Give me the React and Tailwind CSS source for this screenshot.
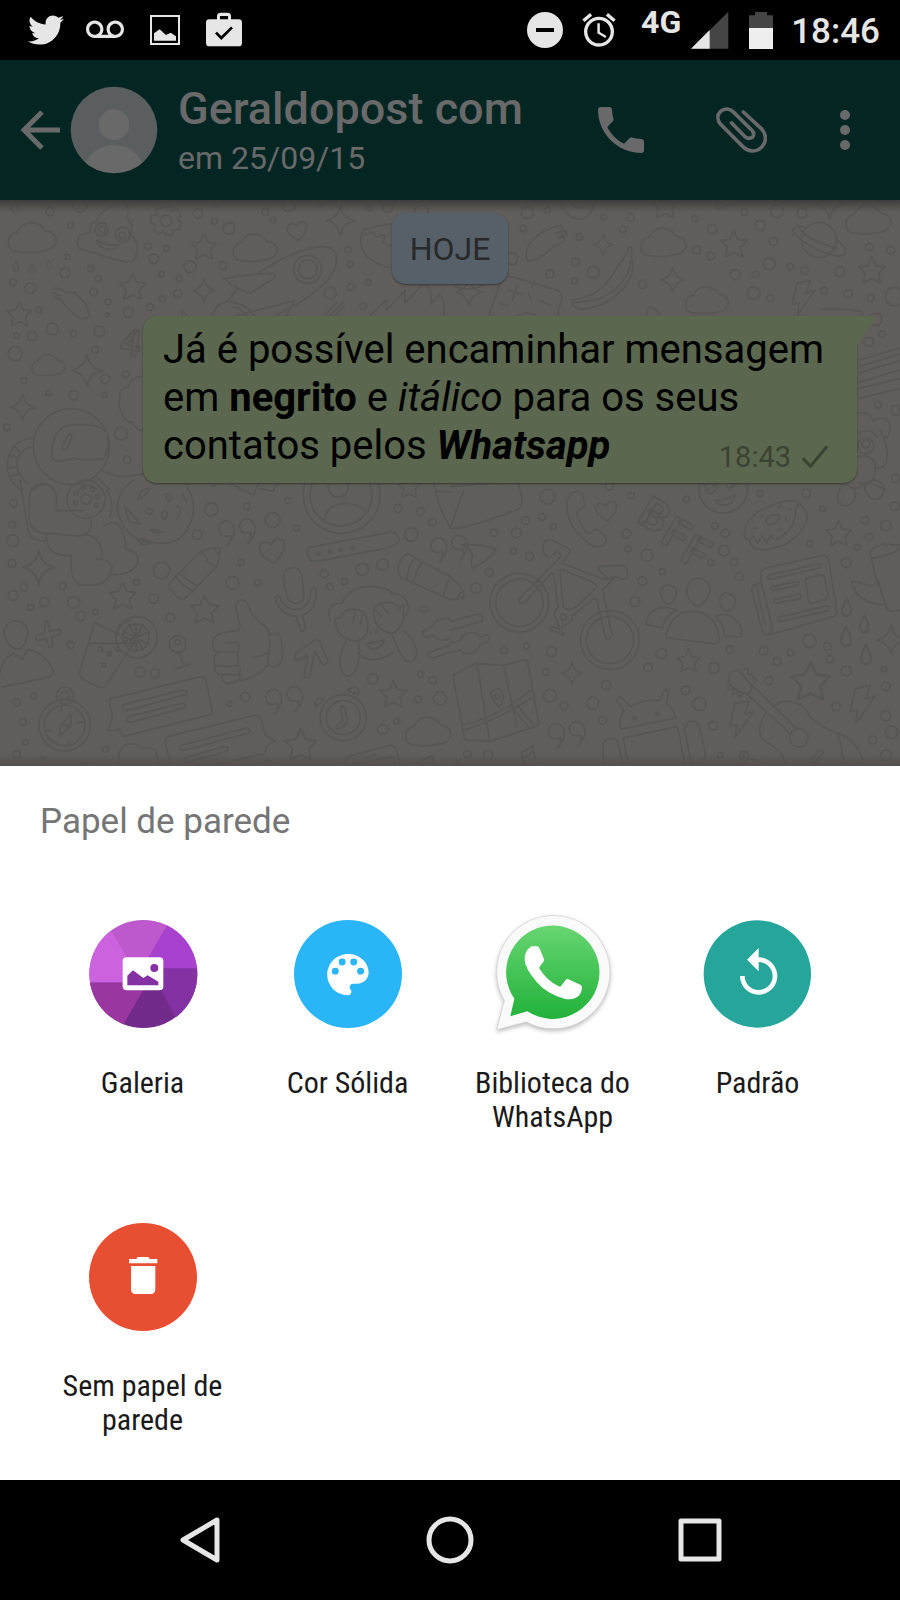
import { FaTwitter } from 'react-icons/fa';
import { MdVoicemail, MdAlarm } from 'react-icons/md';

const STAR = 'M0 -40L12 -14L40 -10L20 10L26 38L0 25L-26 38L-20 10L-40 -10L-12 -14Z';
const SPARKLE = 'M0 -44Q4 -8 42 0Q4 8 0 44Q-8 8 -42 0Q-8 -8 0 -44Z';
const CLOUD = 'M-40 42Q-72 40 -71 12Q-68 -14 -44 -18Q-30 -48 0 -46Q30 -42 38 -22Q76 -16 72 14Q62 36 30 40Q0 46 -40 42Z';
const HEART = 'M6 32Q-34 14 -32 -10Q-24 -32 0 -16Q8 -36 30 -26Q42 0 6 32Z';
const DROP = 'M0 -24Q14 2 10 14Q0 26 -10 14Q-14 0 0 -24Z';
const QUOTES = 'M-30 28Q-14 16 -20 -4Q-54 4 -54 -26Q-48 -52 -24 -46Q14 -24 -30 28ZM34 20Q48 8 42 -12Q10 -6 8 -34Q16 -60 38 -52Q76 -28 34 20Z';
const BOLT = 'M-10 -55L35 -65L20 -22L50 -32L-8 50L-4 10L-26 14Z';
const HAND = 'M-50 -30Q-30 -38 -14 -20L12 -22Q54 10 58 50Q48 62 30 56Q-6 34 -24 6L-48 -8M-48 -8L-28 0M-50 -20L-24 -10M-44 -34L-18 -24';

// the wallpaper is drawn in four tiles, three units to a pixel
const tiles = [
  {
    x: 0,
    y: 0,
    shapes: [
      [CLOUD, 96, 114], [CLOUD, 765, 144, 0.92], [CLOUD, 145, 496, 0.7], [STAR, 612, 140, 0.95], [STAR, 398, 260],
      [STAR, 58, 342, 0.92], [SPARKLE, 1022, 62], [SPARKLE, 612, 272, 0.8], [SPARKLE, 262, 512, 1.1], [SPARKLE, 68, 622, 0.9],
      [HEART, 890, 92, 0.9], [DROP, 48, 200, 0.7], [DROP, 96, 207, 0.7], [DROP, 147, 194, 0.6], [HAND, 210, 298],
    ],
    circles: [
      [150, 35, 12], [240, 15, 22], [45, 25, 12], [212, 76, 9], [202, 170, 8], [195, 218, 15], [272, 206, 9], [295, 236, 9],
      [281, 276, 11], [324, 306, 9], [322, 344, 6], [386, 337, 15], [450, 321, 10], [461, 176, 14], [444, 139, 10], [500, 145, 9],
      [484, 223, 8], [538, 236, 9], [487, 297, 9], [533, 281, 12], [570, 200, 18], [594, 41, 14], [643, 63, 9], [687, 85, 18],
      [668, 196, 12], [655, 6, 14], [796, 36, 10], [819, 60, 8], [866, 15, 20], [964, 5, 12], [1163, 22, 15], [1106, 25, 8],
      [1044, 149, 9], [1051, 193, 9], [1053, 261, 11], [1105, 247, 8], [991, 279, 18], [1090, 320, 10], [1265, 35, 20],
      [39, 247, 10], [91, 265, 16], [117, 330, 8], [157, 387, 18], [49, 407, 8], [97, 408, 13], [46, 461, 21], [220, 401, 9],
      [298, 394, 16], [286, 449, 10], [315, 537, 14], [377, 523, 10], [314, 585, 8], [221, 586, 14], [145, 580, 8],
      [72, 541, 9], [21, 682, 10], [363, 701, 19], [382, 779, 11], [923, 208, 42], [923, 208, 28], [498, 62, 17],
      [305, 88, 20], [307, 88, 10], [368, 104, 22], [367, 106, 10],
    ],
    paths: [
      'M487 20h22l4 16 18-8 12 18-12 14 14 8-6 20-18 2-2 14-20 2-8-12-14 10-16-14 6-16-16-6 4-22 18-2-6-14z',
      'M290 62Q300 30 350 15L365 -10Q395 20 380 52Q402 72 392 105Q425 130 404 180Q390 192 360 182L250 150Q220 140 238 108Q250 98 272 100Q262 74 290 62Z',
      'M290 120Q325 140 358 134Q340 158 310 144Q292 134 290 120Z',
      'M776 218Q880 150 960 140Q1020 138 1008 195Q985 270 830 345M672 236Q740 224 820 220Q836 224 820 236L750 280Q700 264 672 236ZM712 268L682 304Q650 308 638 344M682 304Q740 310 762 346M712 346L884 302L860 346M700 320Q730 328 740 346',
      'M1090 90Q1130 76 1175 72M1090 90Q1070 130 1100 168Q1130 196 1175 204M1096 104L1120 96L1130 112L1155 104L1150 130L1172 138M1112 345L1160 300V330L1215 272V310L1270 250Q1300 262 1292 312L1320 284Q1340 310 1330 346',
      'M975 345L1010 306M990 346L1030 306M1006 346L1032 318',
      'M100 740A114 114 0 1 0 328 740A114 114 0 1 0 100 740ZM156 750Q160 680 220 674Q300 668 322 700Q326 760 310 776Q260 782 215 774Q190 784 170 784Q150 778 156 750Z',
      'M186 740L206 704Q216 696 216 712L200 746Q188 756 186 740ZM100 714Q30 720 22 790Q20 840 62 870M96 740Q54 750 50 790Q50 830 84 850M40 740L60 756M28 766L52 772M28 804L52 800M36 830L58 818M290 830L330 870M310 814Q360 840 430 822M100 870Q120 846 150 856L160 870M236 870Q260 846 290 866',
      'M430 530Q392 528 386 560Q352 568 360 596Q350 620 364 634Q372 668 396 668Q408 690 430 692M545 346V330L562 346',
    ],
    words: [['4', 356, 462, 110, 8]],
  },
  {
    x: 450,
    y: 0,
    shapes: [
      [CLOUD, 640, 128, 0.95], [CLOUD, 1255, 60, 0.95], [CLOUD, 770, 302, 0.9], [STAR, 852, 132], [STAR, 1266, 210],
      [STAR, 645, 15], [SPARKLE, 460, 134, 0.72], [SPARKLE, 668, 240, 0.85], [SPARKLE, 1140, 10, 1.1], [SPARKLE, 58, 276, 0.95],
      [BOLT, 1050, 300, 0.9],
    ],
    circles: [
      [185, 176, 18], [220, 85, 10], [232, 38, 18], [292, 31, 9], [376, 186, 12], [300, 222, 12], [374, 243, 9], [430, 217, 18],
      [388, 111, 10], [461, 52, 9], [519, 88, 10], [541, 52, 12], [578, 253, 12], [740, 150, 12], [782, 168, 12], [787, 87, 14],
      [735, 57, 9], [856, 224, 15], [917, 224, 10], [957, 191, 18], [970, 124, 12], [930, 77, 16], [883, 37, 10], [981, 34, 19],
      [1056, 39, 15], [1021, 200, 9], [1064, 212, 11], [1169, 215, 15], [911, 280, 19], [961, 294, 10], [1122, 273, 10],
      [1195, 281, 12], [1262, 294, 10], [1334, 290, 28], [1258, 141, 11], [1322, 151, 12], [1278, 358, 18], [1296, 403, 10],
      [1256, 425, 14], [1284, 614, 10], [1337, 631, 14], [1337, 835, 12], [1248, 732, 12], [478, 858, 12], [1248, 738, 24],
    ],
    paths: [
      'M232 182Q218 150 250 118Q280 88 330 76Q350 80 320 100L348 92Q356 98 326 112L344 112Q348 124 310 140L290 158Q262 184 232 182Z',
      'M524 170L538 140L546 142L544 170Q560 210 528 254Q480 320 392 328Q366 326 366 300Q440 290 480 236Q500 204 524 170ZM544 180Q534 260 440 300L372 308',
      'M118 345L152 244Q160 226 186 230L320 270Q340 280 334 300L322 345M172 270L218 284M202 256L188 300M262 300L300 314M246 260L252 240M152 312L174 318M234 276L244 300M206 345Q230 334 256 345',
      'M1056 108A52 52 0 1 1 1158 132A52 52 0 0 1 1056 108ZM1046 78Q1020 84 1034 102Q1090 156 1166 168Q1192 166 1186 146L1158 116M1046 84Q1070 120 1160 144M1046 78L1072 82',
      'M330 0Q345 54 390 58Q432 50 430 0M360 0Q372 30 400 22M800 0L804 28L862 0',
      'M1116 328Q1180 324 1236 334Q1244 342 1224 350M1228 480L1350 444M1226 500L1350 462M1226 520L1350 482M1226 546L1350 510M1226 566L1350 536M1226 596L1350 566',
      'M1226 640Q1252 630 1270 662Q1286 650 1310 658Q1330 676 1316 704Q1310 716 1302 712M1290 690Q1320 740 1308 790Q1300 806 1278 804M1226 700Q1260 680 1284 712M1226 770Q1262 762 1276 790Q1280 830 1258 850Q1236 856 1226 846M1264 850Q1290 860 1306 870',
      'M592 345Q590 322 600 320Q622 330 630 345M12 260Q60 276 100 256',
      'M750 870Q742 850 760 852L776 870M840 870Q846 850 862 850Q892 840 892 870',
    ],
    words: [],
  },
  {
    x: 0,
    y: 280,
    shapes: [
      [SPARKLE, 117, 262, 1.15], [STAR, 368, 348], [STAR, 614, 388, 1.05], [STAR, 1180, 642], [STAR, 902, 794, 1.2],
      [STAR, 1228, 20, 0.85], [HEART, 815, 212, 1.15], [QUOTES, 710, 170], [QUOTES, 852, 675], [CLOUD, 1284, 756, 0.95], [QUOTES, 1347, 220],
    ],
    circles: [
      [41, 70, 11], [37, 134, 10], [38, 182, 18], [36, 250, 12], [72, 323, 11], [39, 346, 15], [92, 382, 9], [133, 366, 14],
      [188, 318, 10], [221, 367, 18], [243, 408, 14], [286, 396, 8], [212, 495, 11], [409, 307, 9], [461, 356, 14], [511, 413, 13],
      [485, 271, 25], [592, 164, 14], [634, 88, 20], [740, 79, 10], [818, 120, 22], [863, 61, 9], [889, 145, 9], [723, 248, 9],
      [697, 309, 19], [774, 308, 9], [973, 281, 12], [990, 320, 10], [1033, 305, 9], [1087, 268, 18], [1148, 254, 17],
      [1234, 164, 20], [1195, 85, 12], [1261, 95, 12], [1297, 127, 11], [1273, 387, 9], [1118, 597, 16], [1262, 582, 9],
      [1298, 601, 11], [1254, 658, 10], [1320, 655, 20], [1190, 724, 9], [1148, 748, 15], [420, 576, 15], [465, 580, 13],
      [688, 671, 8], [736, 651, 14], [50, 667, 11], [102, 648, 9], [68, 726, 11], [76, 787, 8], [50, 823, 11], [127, 835, 6],
      [317, 808, 9], [803, 852, 12], [258, 58, 57], [258, 58, 15], [227, 40, 6], [250, 22, 6], [278, 28, 6], [292, 50, 6],
      [288, 76, 6], [227, 69, 6], [410, 472, 62], [408, 472, 40], [302, 508, 7], [328, 522, 6], [352, 508, 6], [312, 555, 6],
      [533, 492, 25], [533, 486, 8], [194, 736, 77], [194, 736, 61], [195, 647, 26], [195, 647, 13], [1030, 713, 69], [1030, 713, 51],
      [1025, 45, 115], [1023, 45, 93], [1015, 22, 30], [956, 221, 4], [990, 215, 4], [1022, 210, 4], [1059, 204, 4],
    ],
    paths: [
      'M60 0L84 150Q92 182 136 184M168 92Q178 8 126 10Q84 16 88 70V120Q96 160 140 160L240 168Q276 160 274 124L262 104M168 92H250M138 162Q136 232 214 226Q208 300 240 314Q330 326 336 260Q324 236 288 238L306 238Q308 164 246 164M312 138Q370 100 378 208Q420 216 412 250Q396 286 336 284M320 30Q346 70 330 110',
      'M366 30L400 0M556 10Q600 80 566 140Q540 200 460 188Q390 186 362 118Q340 90 366 30M414 60Q420 24 450 24Q440 48 414 60ZM374 80L422 132L388 126ZM496 44Q512 34 514 54Q504 76 496 44ZM436 96Q446 78 460 90Q456 112 436 96ZM484 104Q496 80 502 100Q496 132 484 104ZM530 76Q550 86 528 122M450 150Q470 144 486 156Q464 162 450 150ZM412 180Q440 174 452 190Q426 200 412 180M548 44L560 66',
      'M506 324Q504 314 516 302L600 216Q640 200 660 204Q660 244 646 264L560 350Q548 364 530 350ZM524 288Q550 320 582 336M536 276Q560 300 592 318M602 216Q624 230 620 244L648 262M642 206L654 220',
      'M720 438L706 380Q716 348 742 368Q750 400 778 426Q804 440 808 464Q820 460 836 460Q848 480 848 530Q844 560 820 560L802 554Q780 590 720 602M720 438Q720 456 690 454Q630 460 640 500Q642 514 652 516Q636 534 646 556Q640 584 666 584Q666 624 710 604Q730 590 716 580Q728 560 708 556Q720 538 712 520Q724 490 706 486L678 488M652 516H712M646 556Q690 562 708 556M666 584H716M808 464V516Q790 528 758 532M808 516L802 554',
      'M872 264Q900 256 906 290L912 350Q906 372 886 370Q860 366 858 340L850 290Q850 268 872 264ZM824 352Q838 340 842 358Q860 394 896 388Q934 376 932 330Q946 314 948 334Q950 390 908 406L916 446Q908 460 900 448L890 410Q840 406 824 352Z',
      'M990 420Q976 366 1026 370Q1050 320 1106 320Q1160 318 1176 340Q1220 340 1226 384Q1220 410 1210 408M1004 418L1022 412Q1030 384 1070 388Q1104 394 1104 440Q1100 480 1066 484Q1010 476 1004 418ZM1120 400Q1120 372 1160 368Q1190 366 1196 384L1210 374V420Q1196 460 1170 460Q1126 450 1120 400ZM1058 426L1068 392M1082 430L1090 400M1122 386L1144 410M1138 370L1164 400M1038 484Q1010 540 1026 576Q1044 600 1064 576Q1084 540 1076 486M1176 462Q1196 520 1220 544Q1246 550 1252 520Q1246 480 1210 452M1072 520Q1120 560 1180 516M1100 490Q1130 488 1154 480Q1140 508 1116 508Q1104 504 1100 490ZM1112 456V464M1128 450V460',
      'M284 428L404 486L316 618Q306 628 290 618L246 596Q236 584 240 572ZM268 490H404M350 454Q366 430 390 420M408 432V512M370 456L446 492M368 486L448 456M386 434L430 510M430 434L390 506',
      'M538 518L552 558M528 566L570 552M46 508Q12 490 12 452Q24 420 50 422Q84 430 84 460Q80 490 60 506ZM0 580Q4 540 40 520L66 538L84 508Q140 520 162 578Q160 586 150 590L4 622M134 424Q142 418 144 430L148 454L174 448Q188 452 180 462L154 472L160 494Q154 508 146 498L138 476L114 482Q100 474 112 464L134 458Z',
      'M178 770L182 736L214 700L212 736ZM182 736L212 736M184 680V696M206 792V780M136 752H154M248 724L236 730',
      'M340 654L600 590Q614 590 618 604L636 690Q638 704 624 706L376 768Q362 768 360 748L322 752Q340 720 336 700L328 670Q328 656 340 654ZM370 674L550 630Q568 634 556 644L380 692Q360 690 370 674ZM386 710L546 670Q566 672 550 684L390 728Q374 722 386 710Z',
      'M512 855L496 790Q494 770 510 768L764 706Q780 706 784 720L796 766L826 782L798 800Q800 818 790 822L640 855M544 796L740 744Q758 748 744 760L550 812Q534 810 544 796ZM556 834L670 800Q694 800 680 814L556 848Z',
      'M924 530L884 540Q880 520 896 514L946 480Q960 476 962 492L984 544Q978 562 966 552L944 512L930 588Q920 600 912 588L924 530M920 524Q906 540 890 540',
      'M1022 680Q1034 674 1036 690L1042 724Q1034 742 1012 748Q1000 742 1016 732L1028 720ZM946 682Q940 648 972 656ZM1042 632Q1064 612 1076 630V644Z',
      'M930 202L1172 156Q1194 156 1198 180Q1196 196 1140 208L950 244Q928 246 922 224Q918 206 930 202ZM972 124Q980 70 1040 70Q1080 74 1098 94',
      'M1194 266Q1206 222 1226 222L1350 290M1194 266Q1192 284 1210 296L1350 358M1246 236Q1226 250 1220 302M1268 246Q1246 270 1240 312M1328 350L1346 300',
      'M1268 456Q1266 468 1280 474L1300 466Q1320 490 1350 474M1268 456L1298 438Q1310 412 1350 416M1290 516L1350 496M1350 516L1300 534Q1276 534 1290 516M354 855Q360 830 356 820Q366 790 400 792Q420 796 424 806Q470 796 472 832L474 855M240 855L262 846L264 855M1034 855Q1034 834 1050 828L1170 796Q1186 796 1190 810L1200 855M1068 855Q1072 848 1180 830L1184 855M1098 834L1126 824M1244 852L1300 826L1296 855',
      'M620 0L640 20L656 0M690 10L760 46L776 10M780 26L820 34L830 10M1300 0Q1316 90 1350 140M1310 34L1350 36',
    ],
    words: [],
  },
  {
    x: 450,
    y: 280,
    shapes: [
      [STAR, 1166, 160, 0.95], [STAR, 716, 542, 0.85], [STAR, 1082, 604, 1.45], [SPARKLE, 366, 580, 0.75], [SPARKLE, 1324, 480],
      [HEART, 468, 92, 0.95], [QUOTES, 350, 778], [DROP, 1190, 384, 1.2], [DROP, 1243, 434, 1.15], [DROP, 1188, 472, 1.35],
      [DROP, 1248, 526, 1.35], [BOLT, 1226, 680], [BOLT, 864, 724, 0.95],
    ],
    circles: [
      [293, 50, 22], [276, 111, 10], [310, 140, 9], [227, 122, 12], [199, 159, 15], [132, 159, 11], [190, 213, 9], [239, 229, 12],
      [118, 277, 12], [78, 325, 16], [544, 47, 9], [478, 18, 12], [709, 58, 9], [530, 161, 13], [534, 207, 9], [591, 225, 18],
      [637, 275, 9], [577, 303, 13], [555, 365, 14], [794, 138, 10], [826, 160, 12], [822, 212, 16], [783, 248, 9], [852, 246, 11],
      [868, 290, 12], [930, 41, 9], [1069, 40, 13], [1118, 86, 8], [1079, 191, 9], [1246, 121, 12], [1308, 137, 16], [1257, 171, 11],
      [1222, 202, 9], [1189, 248, 15], [1334, 79, 13], [162, 510, 10], [229, 498, 9], [304, 515, 15], [287, 576, 10], [469, 615, 14],
      [299, 647, 19], [342, 677, 12], [428, 669, 18], [457, 721, 12], [594, 563, 12], [634, 521, 16], [792, 564, 16], [840, 509, 11],
      [707, 631, 13], [748, 672, 20], [789, 737, 13], [811, 826, 9], [941, 512, 13], [982, 544, 12], [1021, 518, 10], [1078, 483, 20],
      [1132, 500, 11], [1140, 537, 11], [1189, 573, 15], [957, 602, 12], [1302, 567, 8], [1308, 619, 13], [1159, 680, 13],
      [1308, 708, 15], [1325, 757, 19], [1267, 780, 12], [1308, 826, 16], [52, 823, 11], [114, 825, 15], [20, 850, 9],
      [208, 368, 88], [208, 368, 71], [480, 480, 88], [480, 480, 71], [340, 411, 9], [142, 649, 7], [554, 715, 5], [622, 701, 5],
      [1047, 774, 28], [882, 829, 14], [882, 829, 5], [820, 25, 74],
    ],
    paths: [
      'M0 20L214 0M0 146L40 34M0 146Q40 150 200 90Q220 80 216 56L206 10M36 194Q100 192 138 208Q120 240 68 264Q60 256 68 224Q60 206 36 194Z',
      'M404 80L380 94Q384 130 414 162L440 146Q460 160 470 180Q460 206 430 198Q350 150 350 70Q356 34 384 34Q404 40 404 80Z',
      'M206 360L334 228L322 214L300 230Q280 230 278 204Q280 176 304 180L356 206Q366 214 352 226L336 250L460 298L468 290L446 270V260L516 256Q534 256 532 290Q528 300 516 298L496 290L458 330L486 466Q476 486 466 470L440 358Q430 352 424 362L366 408Q370 424 346 434L334 442L342 466L300 450L306 440L328 448L322 424Q302 400 324 384L312 284Q304 276 296 288L226 366Q206 380 206 360ZM330 274L340 382Q360 396 380 380L436 326Q444 316 430 308L342 270Q330 266 330 274ZM460 298L496 290',
      'M766 20Q780 -6 790 20L800 8Q812 20 782 42Q764 36 766 20ZM796 62Q830 60 854 44Q850 76 820 76Q804 74 796 62ZM830 20Q850 30 862 4',
      'M884 160Q884 110 956 80Q1030 50 1046 70Q1080 90 1068 130Q1030 200 950 208Q904 214 898 180Q880 176 884 160ZM898 180L912 168L922 190L936 168L950 188L962 166L976 180Q1040 150 1036 90L1046 70M948 120Q960 98 988 106Q988 128 962 134Q948 134 948 120ZM930 112L938 106M986 84L994 76M1006 112L1010 124M910 144H920M1016 88H1022M984 150L996 146',
      'M1164 40Q1156 72 1186 78Q1216 74 1216 40L1206 22Q1176 0 1164 40ZM1244 20Q1250 60 1280 58Q1310 46 1298 14Q1280 -10 1250 8ZM1204 22Q1230 30 1244 10',
      'M632 340Q634 316 656 314Q680 320 680 340Q674 368 654 374Q634 360 632 340ZM710 330Q714 298 744 294Q780 300 780 334Q770 370 742 380Q712 366 710 330ZM808 366Q810 338 832 338Q858 346 856 368Q850 390 830 394Q812 386 808 366ZM588 434Q596 380 648 382Q664 384 678 390Q640 414 638 444ZM648 468Q662 394 730 394Q800 400 808 476Q804 492 796 492L654 474ZM796 410Q810 400 840 406Q880 430 874 468Q870 474 824 468Q822 430 796 410Z',
      'M932 278Q936 266 948 264L1116 226Q1132 226 1136 240L1160 390Q1162 406 1150 410L960 464Q940 468 934 444L906 330Q904 316 916 314L934 308ZM934 308L966 440Q966 462 950 464M922 332L946 436M956 286L1100 252Q1120 254 1108 264L960 298Q948 294 956 286ZM966 320L1040 304Q1056 308 1042 316L970 332Q960 328 966 320ZM976 358L1048 342Q1060 348 1050 356L978 370Q966 366 976 358ZM986 412L1130 378Q1148 382 1136 392L990 424Q976 420 986 412ZM1066 306Q1066 298 1074 294L1112 284Q1122 284 1124 292L1134 346Q1134 356 1126 358L1086 370Q1078 370 1076 362Z',
      'M1264 234L1284 320M1206 310Q1206 300 1222 306L1254 316Q1276 320 1284 300L1308 380Q1316 400 1350 390M1210 318Q1220 366 1298 374M1264 234Q1250 204 1304 192L1350 196M1264 234Q1320 230 1350 204M1296 188L1310 200',
      'M0 424L86 402Q104 404 96 424L0 450M0 490L30 482Q40 456 64 458Q84 458 92 472L108 464Q124 468 114 484L90 494Q80 524 44 520L32 510L0 518M0 290Q40 320 44 352L0 360M24 348L34 336',
      'M12 584L78 550L162 556L220 540Q232 538 234 550L266 728Q266 736 256 740L122 784L52 780Q44 780 42 770L10 594ZM82 556L118 776M162 560L200 740M40 734Q150 710 248 626M44 750Q150 716 250 650M184 680L236 742M202 676L250 734M148 682Q120 650 122 640Q134 620 156 632Q168 648 148 682Z',
      'M214 820L248 798L260 855M214 820L222 855M218 836L252 812',
      'M512 748Q506 710 522 694L500 660Q506 644 518 656L542 680Q580 656 630 662L640 636Q650 620 656 634L650 672Q672 690 678 714ZM534 855L520 774L682 740L706 855M462 855L458 800Q464 770 492 776Q506 784 508 800L518 855M704 750Q710 720 732 724Q748 734 750 750L766 820Q766 850 744 850Q726 850 722 840Z',
      'M836 592Q840 570 866 570L904 616Q910 634 890 642Q862 636 836 610ZM880 570Q886 560 894 570L896 584Q908 578 908 592Q922 594 914 608M836 618L832 630L850 624L848 644L866 634L866 652L880 640M890 642L1020 760M908 616L1040 746M968 682Q1000 650 1050 674Q1066 684 1084 714Q1104 736 1160 760Q1210 770 1236 830L1240 855M1160 760Q1180 790 1176 855M946 700Q910 760 950 788Q1000 810 1006 855M1086 838L1106 812Q1124 808 1116 824L1098 846Q1084 850 1086 838ZM1174 826Q1190 840 1188 855M1212 840Q1230 840 1236 855M868 840L864 855M896 836Q930 840 936 855',
    ],
    words: [['B', 556, 124, 130, 30], ['F', 626, 184, 130, 30], ['F', 684, 238, 130, 30]],
  },
];

function Wallpaper() {
  return (
    <svg
      className="absolute inset-0 h-full w-full"
      viewBox="0 0 900 566"
      preserveAspectRatio="xMidYMin slice"
      fill="none"
      stroke="#575653"
      strokeWidth="5"
      strokeLinejoin="round"
      strokeLinecap="round"
      aria-hidden="true"
    >
      {tiles.map((tile, i) => (
        <g key={i} transform={`translate(${tile.x} ${tile.y}) scale(0.3333)`}>
          {tile.shapes.map(([d, x, y, s = 1], n) => (
            <path key={n} d={d} transform={`translate(${x} ${y}) scale(${s})`} />
          ))}
          {tile.circles.map(([cx, cy, r], n) => (
            <circle key={n} cx={cx} cy={cy} r={r} />
          ))}
          {tile.paths.map((d, n) => (
            <path key={n} d={d} />
          ))}
          {tile.words.map(([word, x, y, size, turn], n) => (
            <text key={n} transform={`translate(${x} ${y}) rotate(${turn})`} fontSize={size} fontWeight="700" fontFamily="Roboto, sans-serif">
              {word}
            </text>
          ))}
        </g>
      ))}
    </svg>
  );
}

function StatusBar() {
  return (
    <div className="flex h-[60px] items-center justify-between bg-black pl-7 pr-5 text-[#e6e6e6]">
      <div className="flex items-center gap-[22px]">
        <FaTwitter className="h-9 w-9" />
        <MdVoicemail className="h-[38px] w-[38px]" />
        <svg className="ml-1 h-[30px] w-[30px]" viewBox="450 45 90 90" fill="currentColor">
          <path d="M450 45h90v90h-90zM456 51v78h78v-78z" fillRule="evenodd" />
          <path d="M462 122V100L479 88L498 105L512 98L528 109V122Z" />
        </svg>
        <svg className="ml-1 h-9 w-9" viewBox="621 35 108 108">
          <path
            fill="currentColor"
            d="M654 57V48Q654 37 665 37H686Q696 37 696 48V57H719Q729 57 729 67V127Q729 138 719 138H631Q621 138 621 127V67Q621 57 631 57ZM663 57H687V47H663Z"
          />
          <path d="M651 97L667 113L699 81" fill="none" stroke="#000" strokeWidth="8" />
        </svg>
      </div>
      <div className="flex items-center">
        <svg className="h-9 w-9" viewBox="0 0 36 36">
          <circle cx="18" cy="18" r="18" fill="currentColor" />
          <path d="M9 16h18v4H9z" fill="#000" />
        </svg>
        <MdAlarm className="ml-4 h-10 w-10" />
        <span className="ml-[22px] pb-4 text-[32px] font-bold leading-8">4G</span>
        <svg className="ml-[10px] h-[38px] w-[38px]" viewBox="722 34 114 114">
          <path d="M834 36V147H722Z" fill="#454545" />
          <path d="M778 91V147H722Z" fill="currentColor" />
        </svg>
        <svg className="ml-5 h-[37px] w-6" viewBox="898 36 72 111">
          <path d="M898 46H916V36H952V46H970V84H898Z" fill="#454545" />
          <path d="M898 84H970V147H898Z" fill="#eeeeee" />
        </svg>
        <span className="ml-[18px] pt-1 text-[35px] font-medium leading-10">18:46</span>
      </div>
    </div>
  );
}

function ChatHeader() {
  return (
    <header className="flex h-[140px] items-center bg-[#042623] pl-5 pr-[49px] text-[#696969]">
      <button type="button" aria-label="Voltar">
        <svg className="h-10 w-10" viewBox="0 0 40 40" fill="none" stroke="currentColor" strokeWidth="5">
          <path d="M22 2L4 20L22 38M3 20H40" />
        </svg>
      </button>
      <svg className="ml-[10px] h-[88px] w-[88px]" viewBox="210 257 264 264" aria-hidden="true">
        <clipPath id="avatar">
          <circle cx="342" cy="389" r="130" />
        </clipPath>
        <circle cx="342" cy="389" r="130" fill="#5a5e5e" />
        <g clipPath="url(#avatar)" fill="#696969">
          <circle cx="342" cy="373" r="46" />
          <path d="M240 521Q270 434 342 434Q414 434 444 521Z" />
        </g>
      </svg>
      <div className="ml-5 min-w-0 flex-1 pt-1">
        <h1 className="truncate text-[45px] font-medium leading-[53px]">Geraldopost com</h1>
        <p className="text-[32px] leading-[47px]">em 25/09/15</p>
      </div>
      <div className="flex items-center gap-[72px]">
        <button type="button" aria-label="Ligar">
          <svg className="h-[46px] w-[46px]" viewBox="3 3 18 18" fill="currentColor">
            <path d="M20 15.5c-1.25 0-2.45-.2-3.57-.57-.35-.11-.74-.03-1.02.24l-2.2 2.2c-2.83-1.44-5.15-3.75-6.59-6.59l2.2-2.21c.28-.26.36-.65.25-1C8.7 6.45 8.5 5.25 8.5 4c0-.55-.45-1-1-1H4c-.55 0-1 .45-1 1 0 9.39 7.61 17 17 17 .55 0 1-.45 1-1v-3.5c0-.55-.45-1-1-1z" />
          </svg>
        </button>
        <button type="button" aria-label="Anexar">
          <svg className="h-[46px] w-[51px]" viewBox="793 320 153 138" fill="none" stroke="currentColor" strokeWidth="11" strokeLinecap="round">
            <path d="M875 335L928 384C946 403 944 424 932 438C916 456 892 456 876 441L807 372C796 359 796 344 806 334C818 323 833 324 844 334L902 391C910 400 905 407 902 411C896 415 887 415 880 409L840 368" />
          </svg>
        </button>
        <button type="button" aria-label="Mais opções">
          <svg className="h-10 w-3" viewBox="-1 0 12 40" fill="currentColor">
            <circle cx="5" cy="5" r="5" />
            <circle cx="5" cy="20" r="5" />
            <circle cx="5" cy="35" r="5" />
          </svg>
        </button>
      </div>
    </header>
  );
}

function Chat() {
  return (
    <main className="relative flex-1 overflow-hidden bg-[#605d5a] pb-8">
      <Wallpaper />
      <div className="absolute inset-x-0 top-0 h-3 bg-linear-to-b from-[#3f3d3b] to-transparent" />
      <div className="absolute inset-x-0 bottom-0 h-3 bg-linear-to-t from-[#524f4d] to-transparent" />
      <div className="relative flex flex-col pt-[13px]">
        <div className="self-center rounded-[14px] bg-[#566069] px-[18px] pb-[15px] pt-[17px] text-[32px] leading-[39px] text-[#292929] shadow-[0_1px_2px_#0006]">HOJE</div>
        <div className="relative ml-[143px] mr-[43px] mt-8 rounded-[14px] rounded-tr-none bg-[#5b674e] px-5 pb-[13px] pt-[10px] shadow-[0_1px_2px_#0006]">
          <svg className="absolute left-full top-0 h-[29px] w-[18px]" viewBox="0 0 54 87">
            <path d="M0 0H48Q58 3 52 18L0 87Z" fill="#5b674e" />
          </svg>
          <p className="text-[40px] leading-[48px] text-black">
            Já é possível encaminhar mensagem em <b className="font-bold">negrito</b> e <i>itálico</i> para os seus contatos pelos{' '}
            <b className="font-bold italic">Whatsapp</b>
          </p>
          <div className="absolute bottom-2 right-7 flex items-center gap-[10px] text-[29px] leading-9 text-[#3b4333]">
            18:43
            <svg className="h-6 w-7" viewBox="1054 730 82 73" fill="none" stroke="currentColor" strokeWidth="9" aria-hidden="true">
              <path d="M1058 770L1081 795L1132 734" />
            </svg>
          </div>
        </div>
      </div>
    </main>
  );
}

const GalleryIcon = () => (
  <svg className="h-[120px] w-[120px]" viewBox="248 101 360 360">
    <clipPath id="gallery">
      <circle cx="429" cy="281" r="162" />
    </clipPath>
    <g clipPath="url(#gallery)">
      <path d="M248 101H608V310H248Z" fill="#bd58cd" />
      <path d="M248 101H303L424 307H248Z" fill="#cc63de" />
      <path d="M519 101H608V266H424Z" fill="#a941cf" />
      <path d="M248 307H608V461H248Z" fill="#722b8b" />
      <path d="M429 264H608V461H551L450 264Z" fill="#8331a3" />
      <path d="M248 307H441L353 461H248Z" fill="#9a369f" />
    </g>
    <rect x="367" y="231" width="122" height="99" rx="12" fill="#fff" />
    <path d="M381 315V286L398 270L429 293L442 285L474 304V315Z" fill="#8331a3" />
    <circle cx="462" cy="263" r="12" fill="#8331a3" />
  </svg>
);

const PaletteIcon = () => (
  <svg className="h-[120px] w-[120px]" viewBox="863 102 360 360">
    <circle cx="1043" cy="282" r="162" fill="#29b5f7" />
    <g transform="translate(960 201) scale(6.9)">
      <path
        fill="#fff"
        d="M12 3c-4.97 0-9 4.03-9 9s4.03 9 9 9c.83 0 1.5-.67 1.5-1.5 0-.39-.15-.74-.39-1.01-.23-.26-.38-.61-.38-.99 0-.83.67-1.5 1.5-1.5H16c2.76 0 5-2.24 5-5 0-4.42-4.03-8-9-8z"
      />
      <g fill="#29b5f7">
        <circle cx="6.5" cy="10.5" r="1.5" />
        <circle cx="9.5" cy="6.5" r="1.5" />
        <circle cx="14.5" cy="6.5" r="1.5" />
        <circle cx="17.5" cy="10.5" r="1.5" />
      </g>
    </g>
  </svg>
);

const WhatsAppIcon = () => (
  <svg className="h-[120px] w-[120px] overflow-visible drop-shadow-[0_2px_2px_#0004]" viewBox="128 102 360 360">
    <linearGradient id="whatsapp" x1="0" y1="0" x2="0" y2="1">
      <stop offset="0" stopColor="#67d672" />
      <stop offset="1" stopColor="#22b13a" />
    </linearGradient>
    <path d="M139 449L162 362A170 170 0 1 1 228 426Z" fill="#fafafa" stroke="#cfcfcf" strokeWidth="2" />
    <path d="M180 409L192 356A140 140 0 1 1 231 394Z" fill="url(#whatsapp)" />
    <path
      d="M243 199H260Q265 199 267 204L281 237Q282 241 280 244L268 260Q266 264 268 267Q292 304 325 319Q329 321 332 318L346 300Q349 296 354 298L390 314Q396 317 395 323Q394 340 382 350Q362 362 342 356Q290 342 259 306Q224 265 223 240Q222 213 243 199Z"
      fill="#fff"
    />
  </svg>
);

const ResetIcon = () => (
  <svg className="h-[120px] w-[120px]" viewBox="744 100 360 360">
    <circle cx="922" cy="280" r="161" fill="#26a59a" />
    <path
      transform="translate(842 195) scale(7)"
      fill="#fff"
      d="M12 5V1L7 6l5 5V7c3.31 0 6 2.69 6 6s-2.69 6-6 6-6-2.69-6-6H4c0 4.42 3.58 8 8 8s8-3.58 8-8-3.58-8-8-8z"
    />
  </svg>
);

const TrashIcon = () => (
  <svg className="h-[120px] w-[120px]" viewBox="249 51 360 360">
    <circle cx="429" cy="231" r="162" fill="#e84e31" />
    <path
      d="M387 177H409L413 171H445L449 177H472V190H387ZM393 198H466V268Q466 282 452 282H407Q393 282 393 268Z"
      fill="#fff"
    />
  </svg>
);

const options = [
  { label: 'Galeria', Icon: GalleryIcon },
  { label: 'Cor Sólida', Icon: PaletteIcon },
  { label: 'Biblioteca do WhatsApp', Icon: WhatsAppIcon },
  { label: 'Padrão', Icon: ResetIcon },
  { label: 'Sem papel de parede', Icon: TrashIcon },
];

function WallpaperSheet() {
  return (
    <section className="bg-white px-10 pb-[43px] pt-9">
      <h2 className="text-[35px] leading-10 text-[#757575]">Papel de parede</h2>
      <div className="mt-[72px] grid grid-cols-4 gap-y-[83px]">
        {options.map(({ label, Icon }) => (
          <button key={label} type="button" className="flex flex-col items-center gap-8">
            <Icon />
            <span className="h-[68px] px-4 text-center font-['Roboto_Condensed',Roboto,sans-serif] text-[30px] leading-[34px] text-[#1a1a1a]">
              {label}
            </span>
          </button>
        ))}
      </div>
    </section>
  );
}

function NavBar() {
  return (
    <nav className="grid h-[120px] grid-cols-3 place-items-center bg-black px-[75px] text-[#e6e6e6]">
      <button type="button" aria-label="Voltar">
        <svg className="h-12 w-[42px]" viewBox="0 0 42 48" fill="none" stroke="currentColor" strokeWidth="5" strokeLinejoin="round">
          <path d="M38 4V44L4 24Z" />
        </svg>
      </button>
      <button type="button" aria-label="Início">
        <svg className="h-12 w-12" viewBox="0 0 48 48" fill="none" stroke="currentColor" strokeWidth="5">
          <circle cx="24" cy="24" r="21" />
        </svg>
      </button>
      <button type="button" aria-label="Recentes">
        <svg className="h-12 w-12" viewBox="0 0 48 48" fill="none" stroke="currentColor" strokeWidth="5" strokeLinejoin="round">
          <path d="M5 5H43V43H5Z" />
        </svg>
      </button>
    </nav>
  );
}

export default function App() {
  return (
    <div className="flex min-h-screen flex-col bg-black font-[Roboto,sans-serif]">
      <StatusBar />
      <ChatHeader />
      <Chat />
      <WallpaperSheet />
      <NavBar />
    </div>
  );
}
